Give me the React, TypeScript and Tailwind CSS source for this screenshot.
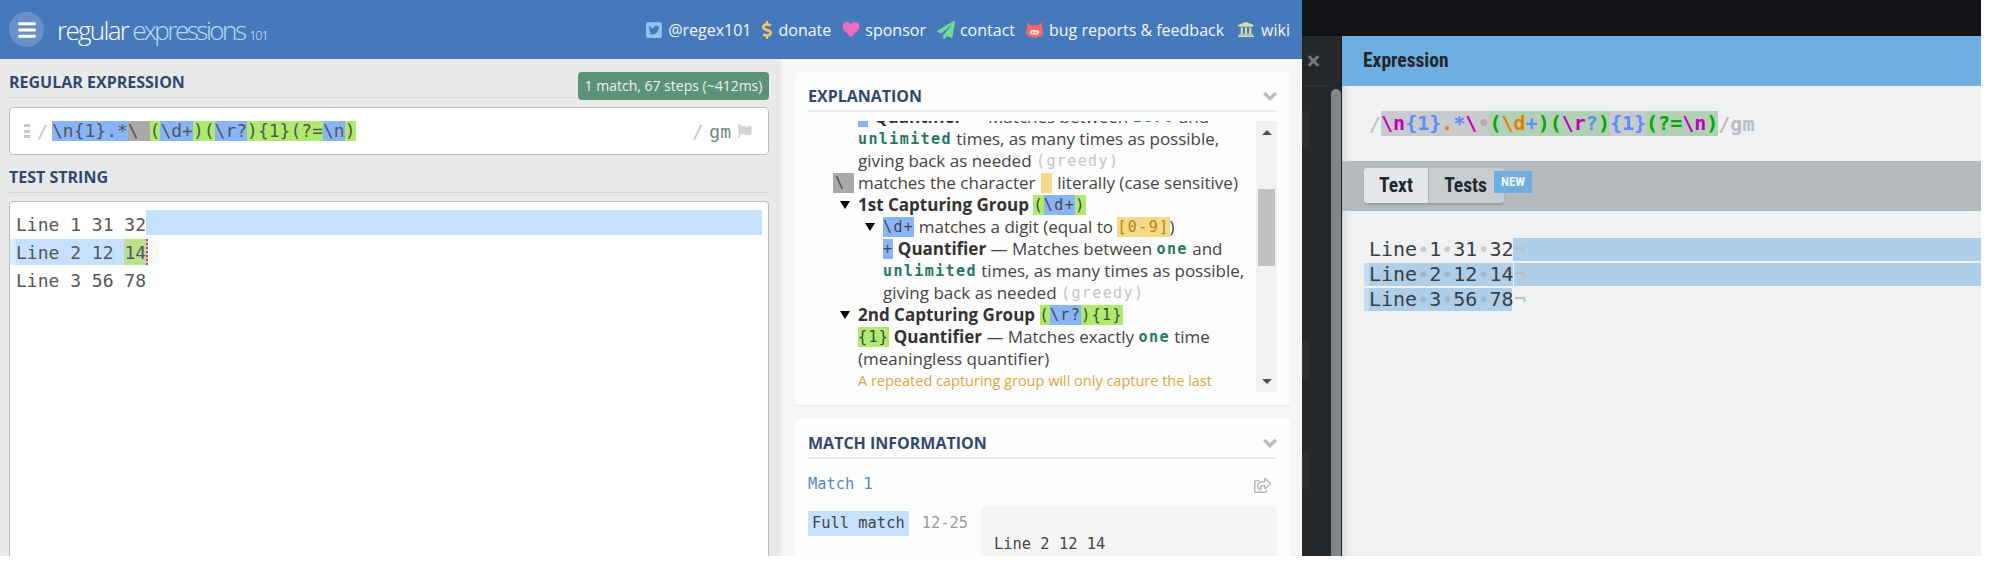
import { FaBars, FaDollarSign, FaFlag, FaHeart, FaPaperPlane, FaRegShareSquare, FaTimes, FaTwitterSquare, FaUniversity } from 'react-icons/fa';

const sans = "font-['Open_Sans',sans-serif]";
const mono = "font-['DejaVu_Sans_Mono',monospace]";
const roboto = "font-['Roboto_Condensed','Roboto',sans-serif]";

function PigIcon() {
  return (
    <svg viewBox="0 0 18 16" className="w-[17px] h-[16px]" fill="#f06a6a">
      <path d="M1 0l4 3h8l4-3v7c1 1 1 2 1 3 0 4-4 6-9 6s-9-2-9-6c0-1 0-2 1-3z" />
      <rect x="4" y="8" width="10" height="5" rx="2.5" fill="#ffd6d6" />
      <circle cx="7" cy="10.5" r="1" fill="#f06a6a" />
      <circle cx="11" cy="10.5" r="1" fill="#f06a6a" />
    </svg>
  );
}

function NavLink({ icon, label, gap }: { icon: React.ReactNode; label: string; gap: string }) {
  return (
    <div className={`flex items-center ${gap}`}>
      {icon}
      <span>{label}</span>
    </div>
  );
}

function Header() {
  return (
    <div className="h-[59px] bg-[#4679bb] flex items-center justify-between pl-[9px] pr-[12px] shrink-0">
      <div className="flex items-center">
        <div className="w-[35px] h-[35px] rounded-full bg-[#6791c8] flex items-center justify-center">
          <FaBars className="text-white w-[20px] h-[20px]" />
        </div>
        <div className={`${sans} ml-[13px] font-light text-[26px] leading-none text-white flex items-baseline`}>
          <span className="tracking-[-1.7px]">regular</span>
          <span className="ml-[4px] tracking-[-2.5px] text-[#bddcf5]">expressions</span>
          <span className="ml-[5px] text-[12px] tracking-[-0.8px] text-[#e4eef8]">101</span>
        </div>
      </div>
      <div className={`${sans} flex items-center gap-[11px] text-[16px] text-[#f4f7fb]`}>
        <NavLink gap="gap-[6px]" label="@regex101" icon={<FaTwitterSquare className="w-[16px] h-[18px] text-[#8fc4f5]" />} />
        <NavLink gap="gap-[6px]" label="donate" icon={<FaDollarSign className="w-[10px] h-[18px] text-[#f5c26b]" />} />
        <NavLink gap="gap-[5px]" label="sponsor" icon={<FaHeart className="w-[18px] h-[17px] text-[#ee6cbb]" />} />
        <NavLink gap="gap-[5px]" label="contact" icon={<FaPaperPlane className="w-[18px] h-[18px] text-[#6fdb95]" />} />
        <NavLink gap="gap-[6px]" label="bug reports & feedback" icon={<PigIcon />} />
        <div className="ml-[2px]">
          <NavLink gap="gap-[6px]" label="wiki" icon={<FaUniversity className="w-[18px] h-[17px] text-[#d9dcaa]" />} />
        </div>
      </div>
    </div>
  );
}

function Title({ children }: { children: React.ReactNode }) {
  return <div className={`${sans} font-bold text-[16px] leading-[22px] text-[#2f4a70]`}>{children}</div>;
}

function LeftPane() {
  const blue = 'bg-[#8ab4f8]';
  const green = 'bg-[#aeea6e]';
  return (
    <div className="w-[781px] bg-[#e9e9e9] pl-[9px] pr-[12px] flex flex-col overflow-hidden shrink-0">
      <div className="flex items-start h-[48px]">
        <div className="flex-1 mr-[2px] pt-[12px] h-[39px] border-b border-[#d6d6d6]">
          <Title>REGULAR EXPRESSION</Title>
        </div>
        <div className={`${sans} mt-[13px] h-[28px] w-[191px] rounded-[4px] bg-[#5b9279] text-[#f0f0f0] text-[14px] leading-[28px] text-center`}>
          1 match, 67 steps (~412ms)
        </div>
      </div>
      <div className={`${mono} h-[48px] bg-white border border-[#bdbdbd] rounded-[4px] flex items-center text-[18px] text-[#555] pl-[14px] pr-[15px]`}>
        <div className="w-[6px] h-[14px] flex flex-col justify-between mr-[7px]">
          <div className="h-[3px] bg-[#c8c8c8]" />
          <div className="h-[3px] bg-[#c8c8c8]" />
          <div className="h-[3px] bg-[#c8c8c8]" />
        </div>
        <span className="text-[#c4c4c4] w-[15px]">/</span>
        <div className="flex-1 flex leading-[20px] whitespace-pre">
          <span className={blue}>{'\\n{1}.*'}</span>
          <span className="bg-[#a9a9a9]">{'\\ '}</span>
          <span className={green}>(</span>
          <span className={blue}>{'\\d+'}</span>
          <span className={green}>)(</span>
          <span className={blue}>{'\\r?'}</span>
          <span className={green}>{'){1}(?='}</span>
          <span className={blue}>{'\\n'}</span>
          <span className={green}>)</span>
        </div>
        <span className="text-[#c4c4c4] mr-[6px]">/</span>
        <span className="text-[#6b8a76] mr-[5px]">gm</span>
        <FaFlag className="w-[17px] h-[14px] text-[#d4d4d4]" />
      </div>
      <div className="h-[38px] pt-[11px] border-b border-[#d6d6d6]">
        <Title>TEST STRING</Title>
      </div>
      <div className={`${mono} mt-[8px] flex-1 bg-white border border-b-0 border-[#bdbdbd] rounded-t-[4px] pt-[8px] text-[18px] text-[#555] whitespace-pre`}>
        <div className="flex h-[28px]">
          <span className="pl-[6px] leading-[29px]">Line 1 31 32</span>
          <span className="flex-1 h-[25px] mr-[6px] bg-[#c5e1ff]" />
        </div>
        <div className="flex h-[28px] pt-[1px] leading-[28px]">
          <span className="h-[26px] w-[6px] bg-[#d9ebff]" />
          <span className="h-[26px] bg-[#c5e1ff]">Line 2 12 </span>
          <span className="h-[26px] bg-[#bce08f] border-r-2 border-dotted border-[#e020e0]">14</span>
        </div>
        <div className="h-[28px] pl-[6px] leading-[30px]">Line 3 56 78</div>
      </div>
    </div>
  );
}

function Caret() {
  return (
    <span className="w-[25px] shrink-0 flex items-center">
      <span className="w-0 h-0 ml-[7px] border-x-[5px] border-x-transparent border-t-[8px] border-t-black" />
    </span>
  );
}

function Code({ children, className }: { children: React.ReactNode; className?: string }) {
  return <span className={`${mono} inline-block text-[15px] tracking-[1.4px] h-[20px] leading-[20px] ${className ?? ''}`}>{children}</span>;
}

function Word({ children }: { children: React.ReactNode }) {
  return <span className={`${mono} font-bold text-[15px] tracking-[1.4px] text-[#1e7a62]`}>{children}</span>;
}

function Greedy() {
  return <span className={`${mono} text-[15px] tracking-[1.4px] text-[#c4c4c4]`}>(greedy)</span>;
}

function Row({ children, className }: { children: React.ReactNode; className: string }) {
  return <div className={`flex items-center h-[22px] ${className}`}>{children}</div>;
}

function Explanation() {
  const blue = 'bg-[#8ab4f8]';
  const green = 'bg-[#aeea6e]';
  const yellow = 'bg-[#f4d98c]';
  return (
    <div className="h-[271px] mt-[9px] flex overflow-hidden">
      <div className={`${sans} flex-1 -mt-[15px] text-[17px] leading-[22px] text-[#444] whitespace-nowrap`}>
        <Row className="pl-[50px]">
          <span className={`w-[10px] h-[20px] ${blue} mr-[6px]`} />
          <b className="text-[#333]">Quantifier</b>&nbsp;— Matches between&nbsp;<Word>zero</Word>&nbsp;and
        </Row>
        <Row className="pl-[50px]"><Word>unlimited</Word>&nbsp;times, as many times as possible,</Row>
        <Row className="pl-[50px]">giving back as needed&nbsp;<Greedy /></Row>
        <Row className="pl-[25px]">
          <Code className="w-[21px] mr-[4px] pl-[2px] bg-[#a9a9a9] text-[#444]">{'\\'}</Code>
          <span>matches the character&nbsp;</span>
          <Code className={`w-[11px] mx-[1px] ${yellow}`}>&nbsp;</Code>
          <span>&nbsp;literally (case sensitive)</span>
        </Row>
        <Row className="pl-[25px]">
          <Caret />
          <b className="text-[#333]">1st Capturing Group</b>&nbsp;
          <Code className={green}>(</Code><Code className={blue}>{'\\d+'}</Code><Code className={green}>)</Code>
        </Row>
        <Row className="pl-[50px]">
          <Caret />
          <Code className={blue}>{'\\d+'}</Code>
          &nbsp;matches a digit (equal to&nbsp;
          <Code className={`${yellow} text-[#b8860b]`}>[0-9]</Code>)
        </Row>
        <Row className="pl-[75px]">
          <Code className={blue}>+</Code>
          &nbsp;<b className="text-[#333]">Quantifier</b>&nbsp;— Matches between&nbsp;<Word>one</Word>&nbsp;and
        </Row>
        <Row className="pl-[75px]"><Word>unlimited</Word>&nbsp;times, as many times as possible,</Row>
        <Row className="pl-[75px]">giving back as needed&nbsp;<Greedy /></Row>
        <Row className="pl-[25px]">
          <Caret />
          <b className="text-[#333]">2nd Capturing Group</b>&nbsp;
          <Code className={green}>(</Code><Code className={blue}>{'\\r?'}</Code><Code className={green}>{'){1}'}</Code>
        </Row>
        <Row className="pl-[50px]">
          <Code className={green}>{'{1}'}</Code>
          &nbsp;<b className="text-[#333]">Quantifier</b>&nbsp;— Matches exactly&nbsp;<Word>one</Word>&nbsp;time
        </Row>
        <Row className="pl-[50px]">(meaningless quantifier)</Row>
        <Row className="pl-[50px] text-[14.5px] text-[#e0a53c]">A repeated capturing group will only capture the last</Row>
      </div>
      <div className="w-[21px] bg-[#f1f1f1] shrink-0 flex flex-col items-center pt-[9px] pb-[8px]">
        <span className="w-0 h-0 border-x-[5px] border-x-transparent border-b-[5px] border-b-[#505050]" />
        <div className="w-[17px] h-[77px] mt-[54px] bg-[#c1c1c1]" />
        <span className="mt-auto w-0 h-0 border-x-[5px] border-x-transparent border-t-[5px] border-t-[#505050]" />
      </div>
    </div>
  );
}

function CardHead({ title }: { title: string }) {
  return (
    <div className="flex items-center justify-between h-[40px] pt-[10px] border-b-2 border-[#ececec]">
      <Title>{title}</Title>
      <svg viewBox="0 0 14 10" className="w-[14px] h-[10px]" fill="none" stroke="#bdbdbd" strokeWidth="3.4">
        <path d="M1.2 2l5.8 5.6L12.8 2" />
      </svg>
    </div>
  );
}

function RightPane() {
  return (
    <div className="flex-1 bg-[#f6f6f6] pt-[13px] pl-[14px] pr-[12px] flex flex-col gap-[14px] overflow-hidden">
      <div className="h-[333px] shrink-0 bg-[#fdfdfd] rounded-[4px] px-[13px] shadow-[0_1px_1px_rgba(0,0,0,0.06)]">
        <CardHead title="EXPLANATION" />
        <Explanation />
      </div>
      <div className="flex-1 bg-[#fdfdfd] rounded-t-[4px] px-[13px]">
        <CardHead title="MATCH INFORMATION" />
        <div className={`${mono} text-[15.4px] flex items-center justify-between mt-[15px] h-[22px]`}>
          <span className="text-[#5b87bd]">Match 1</span>
          <FaRegShareSquare className="w-[17px] h-[15px] mr-[6px] text-[#b4b4b4]" />
        </div>
        <div className={`${mono} text-[15.4px] flex items-start mt-[10px]`}>
          <span className="mt-[5px] h-[25px] leading-[25px] px-[4px] bg-[#c5e1ff] text-[#444]">Full match</span>
          <span className="mt-[5px] ml-[13px] leading-[25px] text-[#999]">12-25</span>
          <div className="ml-[13px] flex-1 h-[60px] rounded-t-[4px] bg-[#f5f5f5] pl-[13px] pt-[27px] leading-[22px] text-[#444]">Line 2 12 14</div>
        </div>
      </div>
    </div>
  );
}

function Sidebar() {
  return (
    <div className="w-[40px] shrink-0 bg-[#25282a] flex border-r border-[#1a1c1e]">
      <div className="w-[29px] flex flex-col">
        <div className="h-[50px] shrink-0 flex items-center pl-[4px] border-b border-[#33373a]">
          <FaTimes className="w-[15px] h-[16px] text-[#777]" />
        </div>
        <div className="w-[7px] h-[38px] mt-[25px] bg-[#2c2f32]" />
        <div className="w-[7px] h-[38px] mt-[192px] bg-[#2c2f32]" />
        <div className="w-[7px] h-[38px] mt-[72px] bg-[#2c2f32]" />
      </div>
      <div className="w-[10px] mt-[53px] rounded-t-[5px] bg-[#7f878e]" />
    </div>
  );
}

const rxCh = 'text-[#c000c0]';
const rxBl = 'text-[#5c8cff]';
const rxGr = 'text-[#00a800]';
const rxOr = 'text-[#e67e00]';

function Dot({ selected }: { selected?: boolean }) {
  return <span className={selected ? 'text-[#9db8cf]' : 'text-[#c8cbcd]'}>•</span>;
}

function Eol() {
  return <span className="text-[#b9bdc0]">¬</span>;
}

function Editor() {
  return (
    <div className="flex-1 bg-[#eff1f3] flex flex-col shadow-[inset_6px_0_6px_-4px_rgba(0,0,0,0.15)] overflow-hidden">
      <div className={`${roboto} h-[50px] shrink-0 bg-[#6faee0] pl-[21px] flex items-center font-bold text-[19.5px] text-[#23272b]`}>Expression</div>
      <div className={`${mono} h-[75px] shrink-0 pl-[27px] flex items-center text-[20px] font-bold whitespace-pre`}>
        <span className="text-[#b8bcc0] font-normal">/</span>
        <div className="flex h-[25px] leading-[25px]">
          <span className="bg-[#c8cacb]">
            <span className={rxCh}>{'\\n'}</span><span className={rxBl}>{'{1}'}</span><span className={rxOr}>.</span><span className={rxBl}>*</span><span className={rxCh}>{'\\'}</span><span className="text-[#aeb2b5]">•</span>
          </span>
          <span className="bg-[#b2d0b5]">
            <span className={rxGr}>(</span><span className={rxOr}>{'\\d'}</span><span className={rxBl}>+</span><span className={rxGr}>)(</span><span className={rxCh}>{'\\r'}</span><span className={rxBl}>?</span><span className={rxGr}>)</span>
          </span>
          <span className={`bg-[#c8cacb] ${rxBl}`}>{'{1}'}</span>
          <span className="bg-[#b2d0b5]">
            <span className={rxGr}>(?=</span><span className={rxCh}>{'\\n'}</span><span className={rxGr}>)</span>
          </span>
        </div>
        <span className="text-[#b8bcc0]">/gm</span>
      </div>
      <div className={`${roboto} h-[50px] shrink-0 bg-[#b5babd] pl-[22px] pt-[7px]`}>
        <div className="flex items-start text-[19.5px] font-bold text-[#23272b]">
          <div className="w-[65px] h-[35px] leading-[35px] text-center bg-[#e4e6e9] rounded-l-[3px] border-r border-[#b5babd] shadow-[0_2px_2px_rgba(0,0,0,0.15)]">Text</div>
          <div className="w-[75px] pr-[2px] h-[35px] leading-[35px] text-center bg-[#c9cdd1] rounded-r-[3px] shadow-[0_2px_2px_rgba(0,0,0,0.15)]">Tests</div>
          <div className="-ml-[10px] mt-[3px] w-[38px] h-[22px] leading-[22px] text-center bg-[#6faee0] text-[#eef6fc] text-[13px] relative">NEW</div>
        </div>
      </div>
      <div className={`${mono} pt-[27px] text-[20px] text-[#3a3f44] whitespace-pre`}>
        <div className="flex h-[23px] leading-[23px] mb-[2px]">
          <span className="pl-[27px] w-[171px]">Line<Dot />1<Dot />31<Dot />32</span>
          <span className="flex-1 bg-[#afcfe9]"><Eol /></span>
        </div>
        <div className="flex h-[23px] leading-[23px] mb-[2px] ml-[22px]">
          <span className="w-[5px] bg-[#c5dcee]" />
          <span className="w-[144px] bg-[#afcfe9]">Line<Dot selected />2<Dot selected />12<Dot selected />14</span>
          <span className="flex-1 bg-[#afcfe9] ml-[1px]"><Eol /></span>
        </div>
        <div className="flex h-[23px] leading-[23px] ml-[22px]">
          <span className="w-[5px] bg-[#c5dcee]" />
          <span className="w-[143px] bg-[#afcfe9]">Line<Dot selected />3<Dot selected />56<Dot selected />78</span>
          <span className="ml-[2px]"><Eol /></span>
        </div>
      </div>
    </div>
  );
}

export default function App() {
  return (
    <div className="w-[2000px] h-[576px] bg-white overflow-hidden">
      <div className="w-[1981px] h-[556px] flex overflow-hidden">
        <div className="w-[1302px] shrink-0 flex flex-col">
          <Header />
          <div className="flex-1 flex min-h-0">
            <LeftPane />
            <RightPane />
          </div>
        </div>
        <div className="flex-1 flex flex-col">
          <div className="h-[36px] shrink-0 bg-[#111316]" />
          <div className="flex-1 flex min-h-0">
            <Sidebar />
            <Editor />
          </div>
        </div>
      </div>
    </div>
  );
}
